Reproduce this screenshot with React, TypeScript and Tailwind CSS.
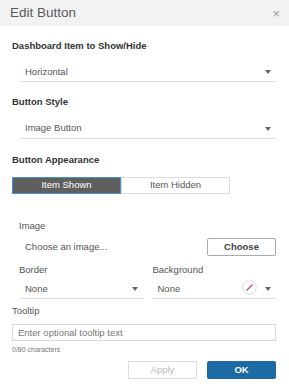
import React, { useState } from 'react';

const font = { fontFamily: '"Liberation Sans", Arial, sans-serif' };

const Caret = () => (
  <svg width="6" height="4" viewBox="0 0 6 4" className="shrink-0">
    <path d="M0 0 L6 0 L3 4 Z" fill="#666" />
  </svg>
);

const SelectRow: React.FC<{ value: string; children?: React.ReactNode; className?: string }> = ({ value, children, className }) => (
  <div className={`flex items-center h-[19px] border-b border-[#dcdcdc] pl-[5px] pr-[5px] ${className ?? ''}`}>
    <span className="flex-1 text-[9.5px] text-[#555]">{value}</span>
    {children}
    <Caret />
  </div>
);

export default function App() {
  const [shown, setShown] = useState(true);

  return (
    <div className="w-[289px] h-[390px] bg-white overflow-hidden" style={font}>
      <div className="h-[26px] bg-[#f2f2f2] flex items-center justify-between pl-[10px] pr-[9px]">
        <span className="text-[13.5px] text-[#5a5a5a]">Edit Button</span>
        <span className="text-[13px] text-[#999] leading-none">×</span>
      </div>

      <div className="pl-[12px] pr-[13px]">
        <div className="mt-[13px] text-[9.5px] font-bold text-[#333]">Dashboard Item to Show/Hide</div>
        <SelectRow value="Horizontal" className="mt-[10px] ml-[8px]" />

        <div className="mt-[13px] text-[9.5px] font-bold text-[#333]">Button Style</div>
        <SelectRow value="Image Button" className="mt-[10px] ml-[8px]" />

        <div className="mt-[14px] text-[9.5px] font-bold text-[#333]">Button Appearance</div>
        <div className="mt-[10px] flex w-[218px] h-[17px] text-[9.5px]">
          <button
            onClick={() => setShown(true)}
            className={`flex-1 flex items-center justify-center ${shown ? 'bg-[#5f5f5f] text-white border border-[#4a90d9]' : 'bg-white text-[#555] border border-[#ddd]'}`}
          >
            Item Shown
          </button>
          <button
            onClick={() => setShown(false)}
            className={`flex-1 flex items-center justify-center ${!shown ? 'bg-[#5f5f5f] text-white border border-[#4a90d9]' : 'bg-white text-[#555] border border-[#ddd]'}`}
          >
            Item Hidden
          </button>
        </div>

        <div className="pl-[7px] mt-[25px]">
          <div className="text-[9.5px] text-[#555]">Image</div>
          <div className="mt-[5px] flex items-center justify-between">
            <span className="pl-[6px] text-[9.5px] text-[#555]">Choose an image...</span>
            <button className="w-[69px] h-[18px] border border-[#aaa] rounded-[2px] text-[9.5px] font-bold text-[#444]">Choose</button>
          </div>

          <div className="mt-[7px] grid grid-cols-2 gap-x-[10px]">
            <div>
              <div className="text-[9.5px] text-[#555]">Border</div>
              <SelectRow value="None" className="mt-[3px] ml-[1px]" />
            </div>
            <div>
              <div className="text-[9.5px] text-[#555]">Background</div>
              <SelectRow value="None" className="mt-[3px]">
                <svg width="15" height="15" viewBox="0 0 15 15" className="mr-[8px] -mt-[3px]">
                  <circle cx="7.5" cy="7.5" r="6.8" fill="white" stroke="#cfcfcf" strokeWidth="0.8" />
                  <line x1="4.5" y1="10.5" x2="10.5" y2="4.5" stroke="#c0394f" strokeWidth="1.1" />
                </svg>
              </SelectRow>
            </div>
          </div>
        </div>

        <div className="mt-[5px] text-[9.5px] text-[#555]">Tooltip</div>
        <input
          className="mt-[4px] w-full h-[17px] border border-[#ddd] px-[5px] text-[9.5px] text-[#555] placeholder-[#777] outline-none"
          placeholder="Enter optional tooltip text"
        />
        <div className="mt-[2px] text-[7px] text-[#777]">0/80 characters</div>

        <div className="mt-[6px] flex justify-end gap-[10px]">
          <button className="w-[69px] h-[18px] border border-[#ddd] text-[9.5px] text-[#bbb]">Apply</button>
          <button className="w-[69px] h-[18px] bg-[#1d6aa5] rounded-[2px] text-[9.5px] font-bold text-white">OK</button>
        </div>
      </div>
    </div>
  );
}
